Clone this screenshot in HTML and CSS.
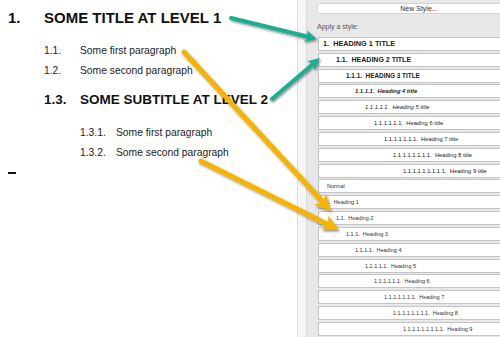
FILE: index.html
```html
<!DOCTYPE html>
<html>
<head>
<meta charset="utf-8">
<link rel="stylesheet" href="styles.css">
</head>
<body>
<div class="page">
  <main class="doc">
    <div class="h1"><span class="n1">1.</span><span>SOME TITLE AT LEVEL 1</span></div>
    <div class="para first"><span class="n2">1.1.</span><span>Some first paragraph</span></div>
    <div class="para"><span class="n2">1.2.</span><span>Some second paragraph</span></div>
    <div class="h2"><span class="n2">1.3.</span><span>SOME SUBTITLE AT LEVEL 2</span></div>
    <div class="para sub first"><span class="n2">1.3.1.</span><span>Some first paragraph</span></div>
    <div class="para sub"><span class="n2">1.3.2.</span><span>Some second paragraph</span></div>
    <div class="cursor"></div>
  </main>
  <aside class="panel">
    <div class="strip"></div>
    <div class="pane">
      <div class="newstyle">New Style...</div>
      <div class="label">Apply a style:</div>
      <ul class="styles">
        <li class="st t1 lv1">1.&nbsp; HEADING 1 TITLE</li>
        <li class="st t2 lv2">1.1.&nbsp; HEADING 2 TITLE</li>
        <li class="st t3 lv3">1.1.1.&nbsp; HEADING 3 TITLE</li>
        <li class="st t4 lv4">1.1.1.1.&nbsp; Heading 4 title</li>
        <li class="st t5 lv5">1.1.1.1.1.&nbsp; Heading 5 title</li>
        <li class="st t6 lv6">1.1.1.1.1.1.&nbsp; Heading 6 title</li>
        <li class="st t6 lv7">1.1.1.1.1.1.1.&nbsp; Heading 7 title</li>
        <li class="st t6 lv8">1.1.1.1.1.1.1.1.&nbsp; Heading 8 title</li>
        <li class="st t6 lv9">1.1.1.1.1.1.1.1.1.&nbsp; Heading 9 title</li>
        <li class="st plain normal">Normal</li>
        <li class="st plain lv1b">1.&nbsp; Heading 1</li>
        <li class="st plain lv2">1.1.&nbsp; Heading 2</li>
        <li class="st plain lv3">1.1.1.&nbsp; Heading 3</li>
        <li class="st plain lv4">1.1.1.1.&nbsp; Heading 4</li>
        <li class="st plain lv5">1.1.1.1.1.&nbsp; Heading 5</li>
        <li class="st plain lv6">1.1.1.1.1.1.&nbsp; Heading 6</li>
        <li class="st plain lv7">1.1.1.1.1.1.1.&nbsp; Heading 7</li>
        <li class="st plain lv8">1.1.1.1.1.1.1.1.&nbsp; Heading 8</li>
        <li class="st plain lv9">1.1.1.1.1.1.1.1.1.&nbsp; Heading 9</li>
      </ul>
    </div>
  </aside>
  <svg class="arrows" width="500" height="337" viewBox="0 0 500 337">
    <defs>
      <filter id="sh" x="-20%" y="-20%" width="140%" height="140%">
        <feDropShadow dx="1" dy="1.5" stdDeviation="0.8" flood-color="#000" flood-opacity="0.45"/>
      </filter>
    </defs>
    <g filter="url(#sh)">
      <line x1="231" y1="18" x2="308" y2="36.7" stroke="#1aae91" stroke-width="4" stroke-linecap="round"/>
      <polygon points="317,39 303.9,42 308.3,36.9 306.7,30.3" fill="#1aae91"/>
      <line x1="272" y1="99" x2="313" y2="64" stroke="#1aae91" stroke-width="4" stroke-linecap="round"/>
      <polygon points="320,58 314.8,70.4 313.2,63.85 307,61.2" fill="#1aae91"/>
      <line x1="184" y1="52" x2="323" y2="202" stroke="#f6b400" stroke-width="5" stroke-linecap="round"/>
      <polygon points="331,211 314.2,204.7 322.85,202.2 326,193.8" fill="#f6b400"/>
      <line x1="201" y1="161" x2="328" y2="224.5" stroke="#f6b400" stroke-width="5" stroke-linecap="round"/>
      <polygon points="339,230 321.1,230 328.3,224.6 328.3,215.7" fill="#f6b400"/>
    </g>
  </svg>
</div>
</body>
</html>
```

FILE: styles.css
```css
* { box-sizing: border-box; }
html, body { margin: 0; padding: 0; background: #fff; }
body { font-family: "Liberation Sans", Arial, sans-serif; color: #111; }

.page {
  position: relative;
  width: 500px;
  height: 337px;
  overflow: hidden;
  display: flex;
}

.doc {
  width: 297px;
  flex: none;
  padding: 8px 0 0 8px;
}

.h1 {
  display: flex;
  height: 20px;
  line-height: 20px;
  font-size: 15px;
  font-weight: bold;
  color: #111;
}
.n1 { width: 36px; flex: none; }

.para {
  display: flex;
  height: 20px;
  line-height: 20px;
  font-size: 10.3px;
  padding-left: 36px;
  color: #222;
}
.para.first { margin-top: 13px; }
.para.sub { padding-left: 72px; }
.n2 { width: 36px; flex: none; }

.h2 {
  display: flex;
  height: 20px;
  line-height: 20px;
  margin-top: 9px;
  padding-left: 36px;
  font-size: 13.5px;
  font-weight: bold;
  color: #111;
}

.cursor {
  margin-top: 9px;
  width: 8px;
  height: 2px;
  background: #111;
}

.panel {
  flex: 1;
  display: flex;
  overflow: hidden;
  border-left: 1px solid #dedede;
}
.strip {
  width: 9px;
  flex: none;
  background: #f6f6f6;
  border-right: 1px solid #d8d8d8;
}
.pane {
  flex: none;
  width: 230px;
  background: #e8e8e8;
  padding: 3px 0 0 10px;
}

.newstyle {
  width: 204px;
  height: 11px;
  line-height: 10px;
  background: #fff;
  border: 1px solid #d4d4d4;
  border-radius: 3px;
  font-size: 7px;
  text-align: center;
  color: #333;
}
.label {
  margin-top: 8px;
  height: 10px;
  line-height: 10px;
  font-size: 7px;
  color: #555;
}
.styles {
  list-style: none;
  margin: 5px 0 0 1px;
  padding: 0;
  display: flex;
  flex-direction: column;
  gap: 1.83px;
}
.st {
  width: 210px;
  height: 14px;
  line-height: 12px;
  background: #fff;
  border: 1px solid #c4c4c4;
  white-space: nowrap;
  color: #222;
  font-size: 5.8px;
}
.t1 { font-size: 7.3px; font-weight: bold; }
.t2 { font-size: 7px; font-weight: bold; }
.t3 { font-size: 6.4px; font-weight: bold; }
.t4 { font-size: 5.8px; font-weight: bold; font-style: italic; }
.t5 { font-size: 5.8px; font-style: italic; }
.t6 { font-size: 5.8px; }
.plain { font-size: 5.5px; color: #333; }

.lv1 { padding-left: 4px; }
.lv1b { padding-left: 7px; }
.normal { padding-left: 8px; }
.lv2 { padding-left: 17px; }
.lv3 { padding-left: 27px; }
.lv4 { padding-left: 36px; }
.lv5 { padding-left: 46px; }
.lv6 { padding-left: 55px; }
.lv7 { padding-left: 65px; }
.lv8 { padding-left: 74px; }
.lv9 { padding-left: 84px; }

.arrows {
  position: absolute;
  left: 0;
  top: 0;
  pointer-events: none;
}
```
